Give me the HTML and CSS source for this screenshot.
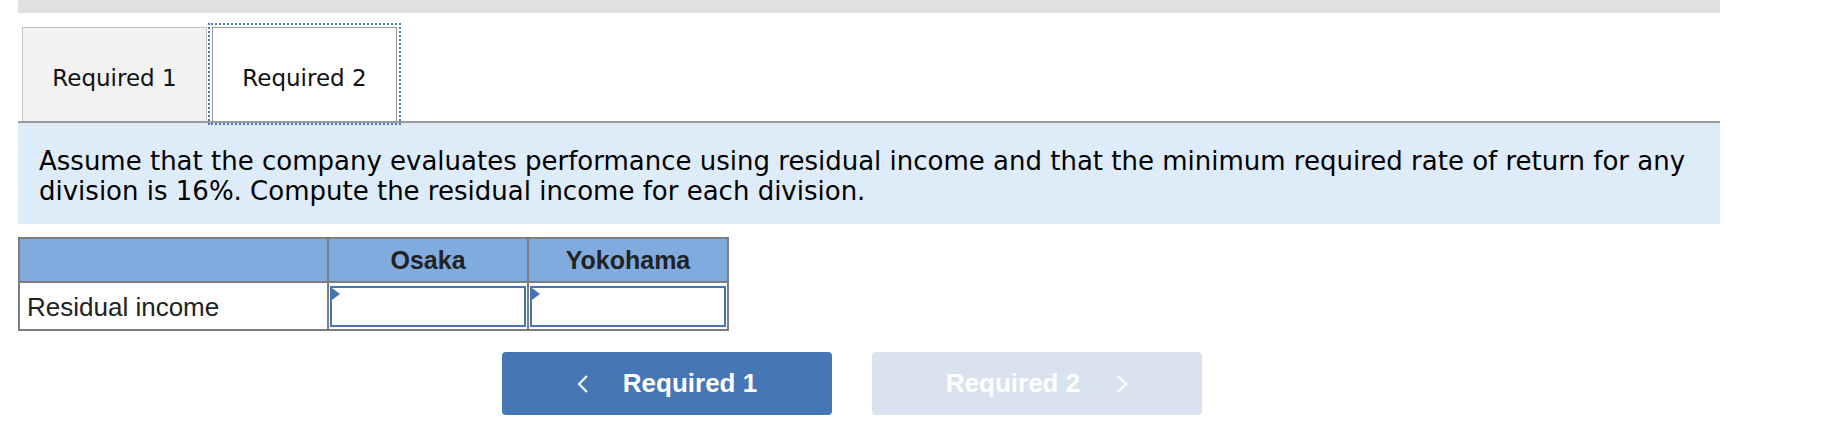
FILE: index.html
```html
<!DOCTYPE html>
<html>
<head>
<meta charset="utf-8">
<link rel="stylesheet" href="styles.css">
</head>
<body>
<div class="page">
  <div class="topbar"></div>
  <div class="tabs">
    <div class="tab tab-inactive">Required 1</div>
    <div class="tab tab-active">Required 2</div>
  </div>
  <div class="question">Assume that the company evaluates performance using residual income and that the minimum required rate of return for any division is 16%. Compute the residual income for each division.</div>
  <table class="grid">
    <colgroup>
      <col class="c-label">
      <col class="c-val">
      <col class="c-val">
    </colgroup>
    <thead>
      <tr>
        <th></th>
        <th>Osaka</th>
        <th>Yokohama</th>
      </tr>
    </thead>
    <tbody>
      <tr>
        <td class="label">Residual income</td>
        <td class="inp"><div class="field"><span class="flag"></span></div></td>
        <td class="inp"><div class="field"><span class="flag"></span></div></td>
      </tr>
    </tbody>
  </table>
  <div class="nav">
    <button class="btn btn-prev"><svg class="chev" viewBox="0 0 12 18" width="12" height="18"><polyline points="10,1 2,9 10,17" fill="none" stroke="#fff" stroke-width="2.2"/></svg><span>Required 1</span></button>
    <button class="btn btn-next"><span>Required 2</span><svg class="chev" viewBox="0 0 12 18" width="12" height="18"><polyline points="2,1 10,9 2,17" fill="none" stroke="#fff" stroke-width="2.2"/></svg></button>
  </div>
</div>
</body>
</html>
```
FILE: styles.css
```css
html, body {
  margin: 0;
  padding: 0;
  background: #fff;
}
.page {
  width: 1702px;
  margin-left: 18px;
}
.topbar {
  height: 13px;
  background: #e0e0e0;
}
.tabs {
  display: flex;
  align-items: flex-end;
  gap: 5px;
  height: 110px;
  padding-left: 4px;
  border-bottom: 2px solid #9a9a9a;
  box-sizing: border-box;
}
.tab {
  width: 185px;
  height: 94px;
  box-sizing: border-box;
  display: flex;
  align-items: center;
  justify-content: center;
  font-family: "DejaVu Sans", Verdana, sans-serif;
  font-size: 23px;
  color: #111;
  padding-top: 6px;
}
.tab-inactive {
  background: #f2f2f2;
  border: 1px solid #c4c4c4;
  border-bottom: none;
}
.tab-active {
  background: #fff;
  border: 1px solid #999;
  border-bottom: none;
  outline: 2px dotted #4a78be;
  outline-offset: 2px;
}
.question {
  background: #deebf8;
  height: 101px;
  box-sizing: border-box;
  padding: 23px 21px 0 21px;
  font-family: "DejaVu Sans", Verdana, sans-serif;
  font-size: 26px;
  line-height: 30px;
  color: #000;
}
.grid {
  margin-top: 13px;
  border-collapse: collapse;
  table-layout: fixed;
  width: 709px;
  font-family: "Liberation Sans", Arial, sans-serif;
}
.c-label { width: 309px; }
.c-val { width: 200px; }
.grid th {
  background: #80abdf;
  border: 2px solid #7d7d7d;
  height: 42px;
  padding: 0;
  font-size: 25px;
  font-weight: bold;
  color: #222;
  text-align: center;
}
.grid td {
  border: 2px solid #7d7d7d;
  height: 43px;
  padding: 0;
}
.grid td.label {
  font-size: 26px;
  color: #222;
  padding-left: 7px;
  padding-top: 3px;
}
.grid td.inp {
  padding: 1px;
}
.field {
  position: relative;
  height: 41px;
  border: 2px solid #4674b3;
  box-sizing: border-box;
  background: #fff;
}
.flag {
  position: absolute;
  left: 0;
  top: 0;
  width: 0;
  height: 0;
  border-top: 6px solid transparent;
  border-bottom: 6px solid transparent;
  border-left: 8px solid #4674b3;
}
.nav {
  display: flex;
  gap: 40px;
  padding-left: 484px;
  margin-top: 21px;
}
.btn {
  width: 330px;
  height: 63px;
  border: none;
  border-radius: 4px;
  display: flex;
  align-items: center;
  justify-content: center;
  gap: 34px;
  font-family: "Liberation Sans", Arial, sans-serif;
  font-size: 26px;
  font-weight: bold;
  color: #fff;
  padding: 0;
}
.btn-prev {
  background: #4677b4;
}
.btn-next {
  background: #d9e3ef;
  gap: 36px;
}
.chev {
  display: block;
}
```
